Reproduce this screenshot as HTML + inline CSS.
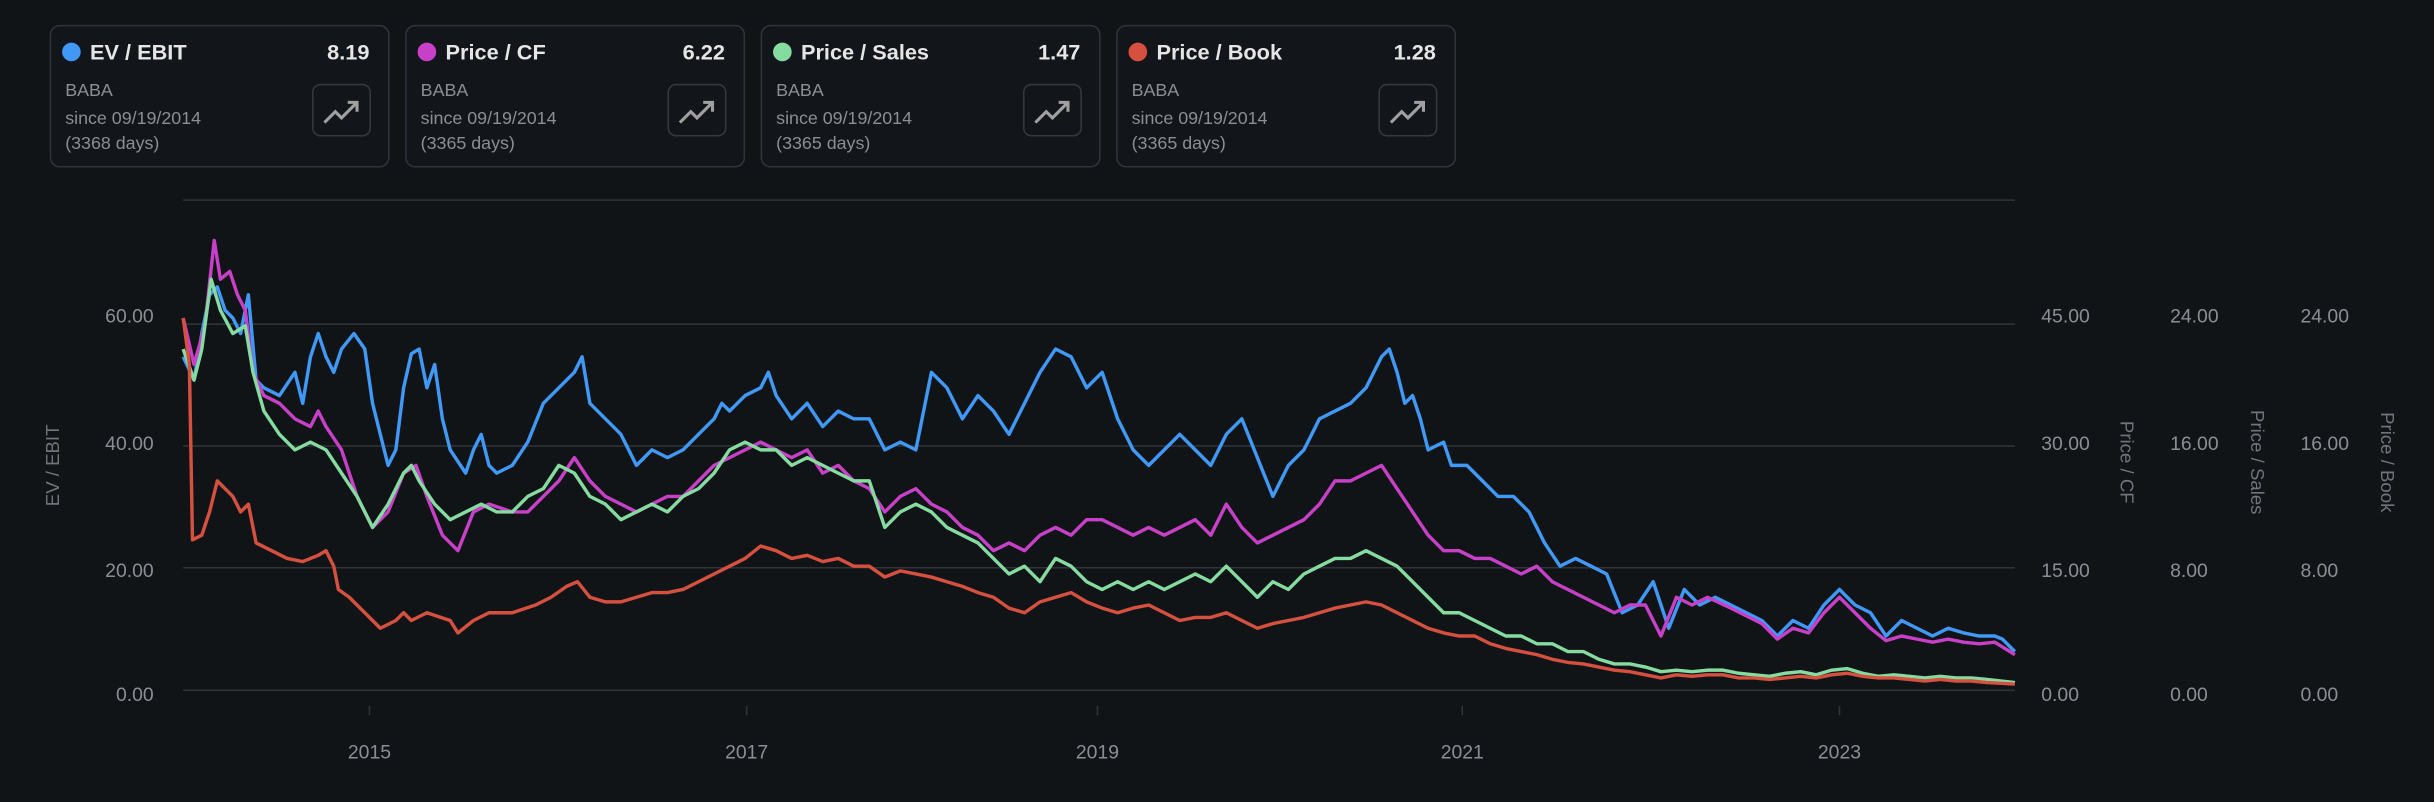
<!DOCTYPE html>
<html><head><meta charset="utf-8"><style>
html,body{margin:0;padding:0;background:#111417;}
svg{display:block;}
text{font-family:"Liberation Sans",sans-serif;}
</style></head><body>
<svg width="2434" height="802" viewBox="0 0 1568 517" preserveAspectRatio="none" xmlns="http://www.w3.org/2000/svg">
<rect width="1568" height="517" fill="#111417"/>
<g id="cards">
 <g transform="translate(32,16)">
  <rect x="0.5" y="0.5" width="218" height="91" rx="6" fill="#121519" stroke="#30343a"/>
  <circle cx="14" cy="17.5" r="6" fill="#4098f7"/>
  <text x="26" y="22.5" font-size="14" font-weight="bold" fill="#e6e6e6">EV / EBIT</text>
  <text x="206" y="22.5" font-size="14" font-weight="bold" fill="#e6e6e6" text-anchor="end">8.19</text>
  <text x="10" y="46" font-size="11.5" fill="#8b8f95">BABA</text>
  <text x="10" y="64" font-size="11.5" fill="#8b8f95">since 09/19/2014</text>
  <text x="10" y="80" font-size="11.5" fill="#8b8f95">(3368 days)</text>
  <rect x="169.5" y="38.5" width="37" height="33" rx="5" fill="none" stroke="#35393f"/>
  <path d="M177 63 L184 56 L188 60 L198 50 M192 50 L198 50 L198 56" fill="none" stroke="#a0a0a0" stroke-width="2"/>
 </g>
 <g transform="translate(261,16)">
  <rect x="0.5" y="0.5" width="218" height="91" rx="6" fill="#121519" stroke="#30343a"/>
  <circle cx="14" cy="17.5" r="6" fill="#c840c8"/>
  <text x="26" y="22.5" font-size="14" font-weight="bold" fill="#e6e6e6">Price / CF</text>
  <text x="206" y="22.5" font-size="14" font-weight="bold" fill="#e6e6e6" text-anchor="end">6.22</text>
  <text x="10" y="46" font-size="11.5" fill="#8b8f95">BABA</text>
  <text x="10" y="64" font-size="11.5" fill="#8b8f95">since 09/19/2014</text>
  <text x="10" y="80" font-size="11.5" fill="#8b8f95">(3365 days)</text>
  <rect x="169.5" y="38.5" width="37" height="33" rx="5" fill="none" stroke="#35393f"/>
  <path d="M177 63 L184 56 L188 60 L198 50 M192 50 L198 50 L198 56" fill="none" stroke="#a0a0a0" stroke-width="2"/>
 </g>
 <g transform="translate(490,16)">
  <rect x="0.5" y="0.5" width="218" height="91" rx="6" fill="#121519" stroke="#30343a"/>
  <circle cx="14" cy="17.5" r="6" fill="#86dba0"/>
  <text x="26" y="22.5" font-size="14" font-weight="bold" fill="#e6e6e6">Price / Sales</text>
  <text x="206" y="22.5" font-size="14" font-weight="bold" fill="#e6e6e6" text-anchor="end">1.47</text>
  <text x="10" y="46" font-size="11.5" fill="#8b8f95">BABA</text>
  <text x="10" y="64" font-size="11.5" fill="#8b8f95">since 09/19/2014</text>
  <text x="10" y="80" font-size="11.5" fill="#8b8f95">(3365 days)</text>
  <rect x="169.5" y="38.5" width="37" height="33" rx="5" fill="none" stroke="#35393f"/>
  <path d="M177 63 L184 56 L188 60 L198 50 M192 50 L198 50 L198 56" fill="none" stroke="#a0a0a0" stroke-width="2"/>
 </g>
 <g transform="translate(719,16)">
  <rect x="0.5" y="0.5" width="218" height="91" rx="6" fill="#121519" stroke="#30343a"/>
  <circle cx="14" cy="17.5" r="6" fill="#d6503f"/>
  <text x="26" y="22.5" font-size="14" font-weight="bold" fill="#e6e6e6">Price / Book</text>
  <text x="206" y="22.5" font-size="14" font-weight="bold" fill="#e6e6e6" text-anchor="end">1.28</text>
  <text x="10" y="46" font-size="11.5" fill="#8b8f95">BABA</text>
  <text x="10" y="64" font-size="11.5" fill="#8b8f95">since 09/19/2014</text>
  <text x="10" y="80" font-size="11.5" fill="#8b8f95">(3365 days)</text>
  <rect x="169.5" y="38.5" width="37" height="33" rx="5" fill="none" stroke="#35393f"/>
  <path d="M177 63 L184 56 L188 60 L198 50 M192 50 L198 50 L198 56" fill="none" stroke="#a0a0a0" stroke-width="2"/>
 </g>
</g>
<g stroke="#30343a" stroke-width="1">
 <line x1="118" y1="129" x2="1298" y2="129"/>
 <line x1="118" y1="209" x2="1298" y2="209"/>
 <line x1="118" y1="287.5" x2="1298" y2="287.5"/>
 <line x1="118" y1="366" x2="1298" y2="366"/>
 <line x1="118" y1="445" x2="1298" y2="445"/>
 <line x1="238" y1="455" x2="238" y2="461"/><line x1="481" y1="455" x2="481" y2="461"/><line x1="707" y1="455" x2="707" y2="461"/><line x1="942" y1="455" x2="942" y2="461"/><line x1="1185" y1="455" x2="1185" y2="461"/>
</g>
<g font-size="12.5" fill="#8b8f95">
 <text x="99" y="208" text-anchor="end">60.00</text>
 <text x="99" y="290" text-anchor="end">40.00</text>
 <text x="99" y="372" text-anchor="end">20.00</text>
 <text x="99" y="452" text-anchor="end">0.00</text>
 <text x="1315" y="208">45.00</text><text x="1315" y="290">30.00</text><text x="1315" y="372">15.00</text><text x="1315" y="452">0.00</text>
 <text x="1398" y="208">24.00</text><text x="1398" y="290">16.00</text><text x="1398" y="372">8.00</text><text x="1398" y="452">0.00</text>
 <text x="1482" y="208">24.00</text><text x="1482" y="290">16.00</text><text x="1482" y="372">8.00</text><text x="1482" y="452">0.00</text>
 <text x="238" y="489" text-anchor="middle">2015</text>
 <text x="481" y="489" text-anchor="middle">2017</text>
 <text x="707" y="489" text-anchor="middle">2019</text>
 <text x="942" y="489" text-anchor="middle">2021</text>
 <text x="1185" y="489" text-anchor="middle">2023</text>
</g>
<g font-size="12" fill="#70757b" text-anchor="middle">
 <text transform="translate(38,300) rotate(-90)">EV / EBIT</text>
 <text transform="translate(1366,298) rotate(90)">Price / CF</text>
 <text transform="translate(1450,298) rotate(90)">Price / Sales</text>
 <text transform="translate(1534,298) rotate(90)">Price / Book</text>
</g>
<g fill="none" stroke-width="2.2" stroke-linejoin="round">
<polyline stroke="#4098f7" points="118,230 125,245 130,215 135,190 140,185 145,200 150,205 155,215 160,190 165,245 170,250 180,255 190,240 195,260 200,230 205,215 210,230 215,240 220,225 228,215 235,225 240,260 245,280 250,300 255,290 260,250 265,228 270,225 275,250 280,235 285,270 290,290 300,305 305,290 310,280 315,300 320,305 330,300 340,285 350,260 360,250 370,240 375,230 380,260 390,270 400,280 410,300 420,290 430,295 440,290 450,280 460,270 465,260 470,265 480,255 490,250 495,240 500,255 510,270 520,260 530,275 540,265 550,270 560,270 570,290 580,285 590,290 595,265 600,240 610,250 620,270 630,255 640,265 650,280 660,260 670,240 680,225 690,230 700,250 710,240 720,270 730,290 740,300 750,290 760,280 770,290 780,300 790,280 800,270 810,295 820,320 830,300 840,290 850,270 860,265 870,260 880,250 890,230 895,225 900,240 905,260 910,255 915,270 920,290 930,285 935,300 945,300 955,310 965,320 975,320 985,330 995,350 1005,365 1015,360 1025,365 1035,370 1045,395 1055,390 1065,375 1075,405 1085,380 1095,390 1105,385 1115,390 1125,395 1135,400 1145,410 1155,400 1165,405 1175,390 1185,380 1195,390 1205,395 1215,410 1225,400 1235,405 1245,410 1255,405 1265,408 1275,410 1285,410 1290,412 1298,420"/>
<polyline stroke="#c840c8" points="118,205 125,235 132,210 138,155 142,180 148,175 153,190 158,200 163,240 170,255 180,260 190,270 200,275 205,265 210,275 220,290 230,320 240,340 250,330 260,305 268,300 275,320 285,345 295,355 305,330 315,325 330,330 340,330 350,320 360,310 370,295 380,310 390,320 400,325 410,330 420,325 430,320 440,320 450,310 460,300 470,295 480,290 490,285 500,290 510,295 520,290 530,305 540,300 550,310 560,315 570,330 580,320 590,315 600,325 610,330 620,340 630,345 640,355 650,350 660,355 670,345 680,340 690,345 700,335 710,335 720,340 730,345 740,340 750,345 760,340 770,335 780,345 790,325 800,340 810,350 820,345 830,340 840,335 850,325 860,310 870,310 880,305 890,300 900,315 910,330 920,345 930,355 940,355 950,360 960,360 970,365 980,370 990,365 1000,375 1010,380 1020,385 1030,390 1040,395 1050,390 1060,390 1070,410 1080,385 1090,390 1100,385 1115,392 1125,397 1135,402 1145,412 1155,405 1165,408 1175,395 1185,385 1195,395 1205,405 1215,413 1225,410 1235,412 1245,414 1255,412 1265,414 1275,415 1285,414 1298,422"/>
<polyline stroke="#86dba0" points="118,225 125,245 130,225 136,180 142,200 150,215 158,210 163,240 170,265 180,280 190,290 200,285 210,290 220,305 230,320 240,340 250,325 260,305 265,300 270,310 280,325 290,335 300,330 310,325 320,330 330,330 340,320 350,315 360,300 370,305 380,320 390,325 400,335 410,330 420,325 430,330 440,320 450,315 460,305 470,290 480,285 490,290 500,290 510,300 520,295 530,300 540,305 550,310 560,310 570,340 580,330 590,325 600,330 610,340 620,345 630,350 640,360 650,370 660,365 670,375 680,360 690,365 700,375 710,380 720,375 730,380 740,375 750,380 760,375 770,370 780,375 790,365 800,375 810,385 820,375 830,380 840,370 850,365 860,360 870,360 880,355 890,360 900,365 910,375 920,385 930,395 940,395 950,400 960,405 970,410 980,410 990,415 1000,415 1010,420 1020,420 1030,425 1040,428 1050,428 1060,430 1070,433 1080,432 1090,433 1100,432 1110,432 1120,434 1130,435 1140,436 1150,434 1160,433 1170,435 1180,432 1190,431 1200,434 1210,436 1220,435 1230,436 1240,437 1250,436 1260,437 1270,437 1280,438 1298,440"/>
<polyline stroke="#d6503f" points="118,205 122,235 124,348 130,345 135,330 140,310 145,315 150,320 155,330 160,325 165,350 175,355 185,360 195,362 205,358 210,355 215,365 218,380 225,385 235,395 245,405 255,400 260,395 265,400 275,395 290,400 295,408 305,400 315,395 330,395 345,390 355,385 365,378 372,375 380,385 390,388 400,388 410,385 420,382 430,382 440,380 450,375 460,370 470,365 480,360 490,352 500,355 510,360 520,358 530,362 540,360 550,365 560,365 570,372 580,368 590,370 600,372 610,375 620,378 630,382 640,385 650,392 660,395 670,388 680,385 690,382 700,388 710,392 720,395 730,392 740,390 750,395 760,400 770,398 780,398 790,395 800,400 810,405 820,402 830,400 840,398 850,395 860,392 870,390 880,388 890,390 900,395 910,400 920,405 930,408 940,410 950,410 960,415 970,418 980,420 990,422 1000,425 1010,427 1020,428 1030,430 1040,432 1050,433 1060,435 1070,437 1080,435 1090,436 1100,435 1110,435 1120,437 1130,437 1140,438 1150,437 1160,436 1170,437 1180,435 1190,434 1200,436 1210,437 1220,437 1230,438 1240,439 1250,438 1260,439 1270,439 1280,440 1298,441"/>
</g>
</svg>
</body></html>
